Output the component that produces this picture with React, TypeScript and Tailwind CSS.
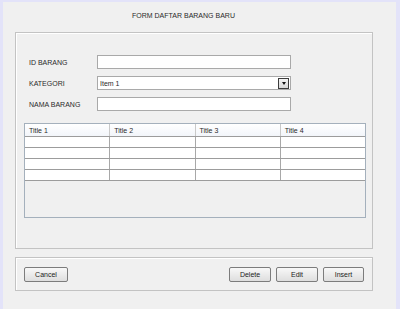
const font = { fontFamily: '"Liberation Sans", Arial, sans-serif' };

function Field({ label, children }: { label: string; children: React.ReactNode }) {
  return (
    <div className="flex items-center">
      <div className="w-[81px] shrink-0 whitespace-nowrap pl-[13px] text-[7px] leading-none text-[#2a2a2a]">
        {label}
      </div>
      {children}
    </div>
  );
}

function TextBox() {
  return <div className="h-[14px] w-[194px] border border-[#a9a9a9] bg-white" />;
}

function Btn({ label, w }: { label: string; w: string }) {
  return (
    <div
      className={`${w} flex h-[15px] items-center justify-center rounded-[2px] border border-[#7c7c7c] bg-gradient-to-b from-[#f8f8f8] to-[#dedede] text-[7px] leading-none text-[#222]`}
    >
      {label}
    </div>
  );
}

const cols = ['Title 1', 'Title 2', 'Title 3', 'Title 4'];

export default function App() {
  return (
    <div
      className="h-[309px] w-[400px] overflow-hidden border-l-[3px] border-r-[4px] border-t-[2px] border-[#e3e3f9] bg-[#f0f0f0]"
      style={font}
    >
      <div className="flex h-[30px] items-center pb-[3px] pl-[129px] text-[7px] leading-none text-[#2a2a2a]">
        FORM DAFTAR BARANG BARU
      </div>

      <div className="ml-[12px] h-[217px] w-[358px] border border-[#c3c3c3] shadow-[inset_1px_1px_0_#fff]">
        <div className="flex flex-col gap-[7px] pt-[22px]">
          <Field label="ID BARANG">
            <TextBox />
          </Field>
          <Field label="KATEGORI">
            <div className="flex h-[14px] w-[194px] items-center justify-between border border-[#a9a9a9] bg-white pl-[2px] pr-[1px]">
              <span className="text-[7px] leading-none text-[#2a2a2a]">Item 1</span>
              <div className="flex h-[11px] w-[11px] items-center justify-center border border-[#3c3c3c] bg-gradient-to-b from-[#f4f4f4] to-[#d8d8d8]">
                <div className="h-0 w-0 border-x-[2.5px] border-t-[3px] border-x-transparent border-t-[#111]" />
              </div>
            </div>
          </Field>
          <Field label="NAMA BARANG">
            <TextBox />
          </Field>
        </div>

        <div className="ml-[8px] mt-[12px] h-[95px] w-[342px] border border-[#a4b0bc] bg-[#f0f0f0]">
          <div className="flex h-[13px] border-b border-[#9c9c9c] bg-gradient-to-b from-white to-[#f2f5fa]">
            {cols.map((c, i) => (
              <div
                key={c}
                className={`flex flex-1 items-center pl-[4px] text-[7px] leading-none text-[#2a2a2a] ${i < 3 ? 'border-r border-[#c9c9c9]' : ''}`}
              >
                {c}
              </div>
            ))}
          </div>
          {[0, 1, 2, 3].map((r) => (
            <div key={r} className="flex h-[11px] border-b border-[#9c9c9c] bg-white">
              {cols.map((c, i) => (
                <div key={c} className={`flex-1 ${i < 3 ? 'border-r border-[#a8a8a8]' : ''}`} />
              ))}
            </div>
          ))}
        </div>
      </div>

      <div className="ml-[12px] mt-[8px] flex h-[34px] w-[358px] items-center justify-between border border-[#c3c3c3] px-[8px] shadow-[inset_1px_1px_0_#fff]">
        <Btn label="Cancel" w="w-[44px]" />
        <div className="flex gap-[5px]">
          <Btn label="Delete" w="w-[42px]" />
          <Btn label="Edit" w="w-[42px]" />
          <Btn label="Insert" w="w-[41px]" />
        </div>
      </div>
    </div>
  );
}
